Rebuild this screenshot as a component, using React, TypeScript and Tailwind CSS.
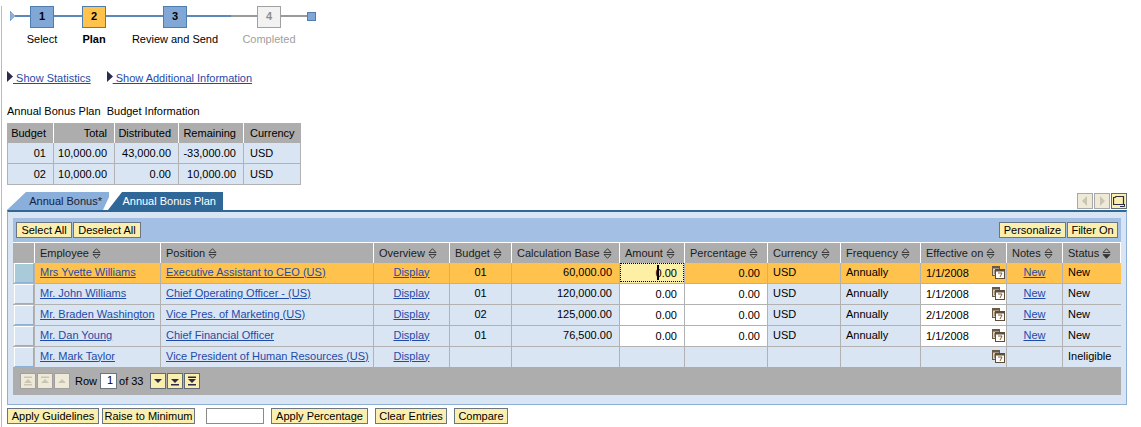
import type { ReactNode } from 'react';

const employees = [
  { name: 'Mrs Yvette Williams', position: 'Executive Assistant to CEO (US)', budget: '01', base: '60,000.00', date: '1/1/2008', active: true },
  { name: 'Mr. John Williams', position: 'Chief Operating Officer - (US)', budget: '01', base: '120,000.00', date: '1/1/2008' },
  { name: 'Mr. Braden Washington', position: 'Vice Pres. of Marketing (US)', budget: '02', base: '125,000.00', date: '2/1/2008' },
  { name: 'Mr. Dan Young', position: 'Chief Financial Officer', budget: '01', base: '76,500.00', date: '1/1/2008' },
  { name: 'Mr. Mark Taylor', position: 'Vice President of Human Resources (US)', ineligible: true },
];

const columns = [
  { label: 'Employee' },
  { label: 'Position' },
  { label: 'Overview' },
  { label: 'Budget' },
  { label: 'Calculation Base' },
  { label: 'Amount' },
  { label: 'Percentage' },
  { label: 'Currency' },
  { label: 'Frequency' },
  { label: 'Effective on' },
  { label: 'Notes' },
  { label: 'Status', sorted: true },
];

function Btn({ children, className = '' }: { children: ReactNode; className?: string }) {
  return (
    <button className={`h-[16px] border border-[#6b7680] bg-[#fbefb0] text-[11px] leading-[13px] text-black ${className}`}>
      {children}
    </button>
  );
}

function Square({ n, tone, className = '' }: { n: number; tone: string; className?: string }) {
  return (
    <div className={`flex h-[22px] w-[24px] items-center justify-center border pb-[2px] text-[11px] font-bold ${tone} ${className}`}>
      {n}
    </div>
  );
}

function Line({ className }: { className: string }) {
  return <div className={`mb-[2px] h-[1.5px] ${className}`} />;
}

function Expander() {
  return (
    <svg width="6" height="11" viewBox="0 0 6 11" className="-mt-px shrink-0">
      <path d="M0 0 L6 5.5 L0 11 Z" fill="#2b2d4a" />
    </svg>
  );
}

function SortIcon({ sorted }: { sorted?: boolean }) {
  return (
    <svg width="9" height="11" viewBox="0 0 9 11" className="ml-[3px] shrink-0">
      <path d="M4.5 0.7 L8 4.5 L1 4.5 Z" fill="none" stroke="#3d3d3d" strokeWidth="1" />
      <path d="M4.5 10.3 L8 6.5 L1 6.5 Z" fill={sorted ? '#333' : 'none'} stroke="#3d3d3d" strokeWidth="1" />
    </svg>
  );
}

function CalendarIcon() {
  return (
    <svg width="13" height="13" viewBox="0 0 13 13" className="-mt-[2px] shrink-0">
      <rect x="0.5" y="0.5" width="7" height="9" fill="#d8d0c0" stroke="#6b5a45" />
      <rect x="0.5" y="0.5" width="7" height="2" fill="#6b5a45" />
      <path d="M2 5 H3.5 M2 7 H3.5" stroke="#6b5a45" />
      <rect x="3.5" y="3.5" width="9" height="9" fill="#fff" stroke="#5d4c38" />
      <rect x="3.5" y="3.5" width="9" height="2" fill="#5d4c38" />
      <path d="M6 7 H10 L8 11" fill="none" stroke="#8a5a2a" strokeWidth="1" />
    </svg>
  );
}

function PagerBtn({ disabled, dir, bars }: { disabled?: boolean; dir: 'up' | 'down'; bars: number }) {
  const color = disabled ? '#c9c5b5' : '#2b2d4a';
  return (
    <div className={`flex h-[16px] w-[16px] items-center justify-center border ${disabled ? 'border-[#a0a0a0] bg-[#efe9d8]' : 'border-[#5f6a75] bg-[#fbefb0]'}`}>
      <svg width="10" height="10" viewBox="0 0 10 10">
        <path d={dir === 'up' ? 'M5 3 L9 7 L1 7 Z' : 'M1 3 L9 3 L5 7 Z'} fill={color} />
        {bars > 0 && <rect x="1" y={dir === 'up' ? 0.5 : 8} width="8" height="1.5" fill={color} />}
        {bars > 1 && <rect x="1" y={dir === 'up' ? 8 : 0.5} width="8" height="1.5" fill={color} />}
      </svg>
    </div>
  );
}

function NavBtn({ children, active }: { children: ReactNode; active?: boolean }) {
  return (
    <div className={`flex h-[16px] w-[16px] items-center justify-center border ${active ? 'border-[#5f6a75] bg-[#fbefb0]' : 'border-[#a8a8a8] bg-[#efe9d8]'}`}>
      {children}
    </div>
  );
}

// base cell; "tx" lifts plain text a little above the input-style cells
const td = 'h-[21px] border-b border-[#b2b2b2] p-0 text-black';
const tr = 'border-r';
const tx = 'pb-[2px]';
const link = 'text-[#1f4aa8] underline';

function BudgetTable() {
  const rows = [
    ['01', '10,000.00', '43,000.00', '-33,000.00'],
    ['02', '10,000.00', '0.00', '10,000.00'],
  ];
  const body = 'h-[21px] border-r border-b border-[#b2b2b2] bg-[#d9e5f3] p-0 pr-[7px] text-right';
  return (
    <table className="w-[294px] table-fixed border-separate border-spacing-0 text-[11px] text-black">
      <colgroup>
        <col className="w-[47px]" />
        <col className="w-[61px]" />
        <col className="w-[64px]" />
        <col className="w-[65px]" />
        <col className="w-[57px]" />
      </colgroup>
      <thead>
        <tr className="h-[20px] bg-[#adadad]">
          {['Budget', 'Total', 'Distributed', 'Remaining'].map((h) => (
            <th key={h} className="border-r border-white p-0 pr-[7px] text-right font-normal">{h}</th>
          ))}
          <th className="p-0 pl-[6px] text-left font-normal">Currency</th>
        </tr>
      </thead>
      <tbody>
        {rows.map((r) => (
          <tr key={r[0]}>
            {r.map((c, i) => (
              <td key={i} className={`${body} ${i === 0 ? 'border-l' : ''}`}>{c}</td>
            ))}
            <td className="h-[21px] border-r border-b border-[#b2b2b2] bg-[#d9e5f3] p-0 pl-[6px]">USD</td>
          </tr>
        ))}
      </tbody>
    </table>
  );
}

function EmployeeTable() {
  return (
    <table className="w-[1108px] table-fixed border-separate border-spacing-0 text-[11px]">
      <colgroup>
        <col className="w-[22px]" />
        <col className="w-[126px]" />
        <col className="w-[213px]" />
        <col className="w-[76px]" />
        <col className="w-[62px]" />
        <col className="w-[108px]" />
        <col className="w-[65px]" />
        <col className="w-[83px]" />
        <col className="w-[73px]" />
        <col className="w-[80px]" />
        <col className="w-[86px]" />
        <col className="w-[56px]" />
        <col className="w-[58px]" />
      </colgroup>
      <thead>
        <tr>
          <th className="h-[21px] border-t border-r border-white bg-[#adadad] p-0" />
          {columns.map((c) => (
            <th key={c.label} className="h-[21px] border-t border-r border-white bg-[#adadad] p-0 pl-[5px] font-normal text-[#1c1c1c]">
              <div className="flex items-center whitespace-nowrap">
                {c.label}
                <SortIcon sorted={c.sorted} />
              </div>
            </th>
          ))}
        </tr>
      </thead>
      <tbody>
        {employees.map((e) => {
          const bg = e.active ? 'bg-[#ffc34d]' : 'bg-[#d9e5f3]';
          const edit = e.ineligible ? 'bg-[#d9e5f3]' : e.active ? 'bg-[#ffc34d]' : 'bg-white';
          const cell = `${td} ${tr} ${tx} ${bg} pl-[5px]`;
          return (
            <tr key={e.name}>
              <td className={`${td} ${tr} ${bg}`}>
                <div className={`mx-auto h-[20px] w-[20px] border border-t-white border-l-white border-r-[#8fb0d6] border-b-[#8fb0d6] ${e.active ? 'bg-[#a9cbd9]' : 'bg-[#d9e5f3]'}`} />
              </td>
              <td className={cell}><a className={link}>{e.name}</a></td>
              <td className={cell}><a className={link}>{e.position}</a></td>
              <td className={`${td} ${tr} ${tx} ${bg} text-center`}><a className={link}>Display</a></td>
              <td className={`${td} ${tr} ${tx} ${bg} text-center`}>{e.budget}</td>
              <td className={`${td} ${tr} ${tx} ${bg} pr-[7px] text-right`}>{e.base}</td>
              {e.active ? (
                <td className={`${td} ${tr} relative bg-[#fdf0a5] pr-[7px] text-right`}>
                  <div className="absolute inset-x-0 top-0 bottom-px border border-dotted border-black" />
                  <div className="absolute top-[2px] left-[37px] h-[15px] w-[1.5px] bg-black" />
                  0.00
                </td>
              ) : (
                <td className={`${td} ${tr} ${edit} pr-[7px] text-right`}>{e.ineligible ? '' : '0.00'}</td>
              )}
              <td className={`${td} ${tr} ${edit} pr-[7px] text-right`}>{e.ineligible ? '' : '0.00'}</td>
              <td className={cell}>{e.ineligible ? '' : 'USD'}</td>
              <td className={cell}>{e.ineligible ? '' : 'Annually'}</td>
              <td className={`${td} ${tr} ${edit} pl-[5px]`}>
                <div className="flex items-center justify-between pr-[1px]">
                  <span>{e.date}</span>
                  <CalendarIcon />
                </div>
              </td>
              <td className={`${td} ${tr} ${tx} ${bg} text-center`}>{!e.ineligible && <a className={link}>New</a>}</td>
              <td className={`${td} ${tx} ${bg} pl-[5px]`}>{e.ineligible ? 'Ineligible' : 'New'}</td>
            </tr>
          );
        })}
      </tbody>
    </table>
  );
}

export default function App() {
  return (
    <div className="h-[427px] w-[1141px] overflow-hidden bg-white pl-px font-['Liberation_Sans',sans-serif] text-[11px] leading-[13px] text-black">
      <div className="h-full border-l border-[#a3c0e4] pl-[5px]">
        {/* roadmap */}
        <div className="mt-[6px] flex h-[22px] items-center pl-[3px]">
          <svg width="5" height="10" viewBox="0 0 5 10" className="mb-[2px] shrink-0">
            <path d="M0 0 L5 5 L0 10 Z" fill="#8fb0d6" stroke="#5b88b8" strokeWidth="0.5" />
          </svg>
          <Line className="w-[15px] bg-[#5b88b8]" />
          <Square n={1} tone="border-[#4f7dad] bg-[#81a7d6]" />
          <Line className="w-[28px] bg-[#5b88b8]" />
          <Square n={2} tone="border-[#4f7dad] bg-[#ffc34d]" />
          <Line className="w-[57px] bg-[#5b88b8]" />
          <Square n={3} tone="border-[#4f7dad] bg-[#81a7d6]" />
          <Line className="w-[44px] bg-[#5b88b8]" />
          <Line className="w-[26px] bg-[#999]" />
          <Square n={4} tone="border-[#a0a0a0] bg-[#f2f2f2] text-[#8c8c8c]" />
          <Line className="w-[26px] bg-[#999]" />
          <div className="mb-[2px] h-[9px] w-[9px] border border-[#4f7dad] bg-[#81a7d6]" />
        </div>
        <div className="mt-[5px] flex pl-[5px] text-center">
          <div className="w-[60px]">Select</div>
          <div className="w-[44px] font-bold">Plan</div>
          <div className="w-[118px]">Review and Send</div>
          <div className="w-[70px] text-[#a0a0a0]">Completed</div>
        </div>

        {/* expandable links */}
        <div className="mt-[26px] flex items-start">
          <Expander />
          <a className="text-[#1f4aa8] underline">&nbsp;Show Statistics</a>
          <div className="w-[16px]" />
          <Expander />
          <a className="text-[#1f4aa8] underline">&nbsp;Show Additional Information</a>
        </div>

        <div className="mt-[20px]">Annual Bonus Plan&nbsp; Budget Information</div>
        <div className="mt-[5px]">
          <BudgetTable />
        </div>

        {/* tabs */}
        <div className="mt-[7px] flex h-[18px] w-[1120px] justify-between">
          <div className="flex">
            <div className="flex w-[102px] items-center justify-end bg-[#8aafda] pr-[7px] text-[#16233a] [clip-path:polygon(19px_0,102px_0,102px_5px,96px_100%,0_100%)]">
              Annual Bonus*
            </div>
            <div className="-ml-px flex w-[115px] items-center justify-end bg-[#2f6799] pr-[7px] text-white [clip-path:polygon(14px_0,100%_0,100%_100%,0_100%)]">
              Annual Bonus Plan
            </div>
          </div>
          <div className="flex gap-px pt-px">
            <NavBtn>
              <svg width="6" height="10" viewBox="0 0 6 10"><path d="M5 0 L0 5 L5 10 Z" fill="#c9c5b5" /></svg>
            </NavBtn>
            <NavBtn>
              <svg width="6" height="10" viewBox="0 0 6 10"><path d="M1 0 L6 5 L1 10 Z" fill="#c9c5b5" /></svg>
            </NavBtn>
            <NavBtn active>
              <svg width="12" height="11" viewBox="0 0 12 11">
                <path d="M0.5 1.5 H2 L3 0.5 H10.5 V8.5 H0.5 Z" fill="none" stroke="#2b2d4a" strokeWidth="1.2" />
                <path d="M7 10.5 H11.5 V8" fill="none" stroke="#2b2d4a" />
              </svg>
            </NavBtn>
          </div>
        </div>

        {/* panel */}
        <div className="h-[195px] w-[1120px] border-x border-b border-t-2 border-x-[#8fb0d6] border-b-[#8fb0d6] border-t-[#2f6799] bg-[#d9e5f3] px-[5px] pt-[6px]">
          <div className="flex h-[24px] justify-between bg-[#a3c0e4] px-[3px] pt-[4px]">
            <div className="flex gap-px">
              <Btn className="w-[56px]">Select All</Btn>
              <Btn className="w-[68px]">Deselect All</Btn>
            </div>
            <div className="flex gap-px">
              <Btn className="w-[67px]">Personalize</Btn>
              <Btn className="w-[51px]">Filter On</Btn>
            </div>
          </div>
          <EmployeeTable />
          <div className="-mt-px flex h-[28px] items-center bg-[#adadad] pl-[7px]">
            <div className="flex gap-px">
              <PagerBtn disabled dir="up" bars={2} />
              <PagerBtn disabled dir="up" bars={1} />
              <PagerBtn disabled dir="up" bars={0} />
            </div>
            <span className="ml-[5px]">Row</span>
            <div className="ml-[3px] h-[16px] w-[17px] border border-[#6b7680] bg-white pr-[3px] text-right">1</div>
            <span className="ml-[2px]">of 33</span>
            <div className="ml-[7px] flex gap-px">
              <PagerBtn dir="down" bars={0} />
              <PagerBtn dir="down" bars={1} />
              <PagerBtn dir="down" bars={2} />
            </div>
          </div>
        </div>

        {/* bottom actions */}
        <div className="mt-[3px] flex items-start">
          <Btn className="w-[92px]">Apply Guidelines</Btn>
          <Btn className="ml-[3px] w-[93px]">Raise to Minimum</Btn>
          <div className="ml-[11px] h-[16px] w-[58px] border border-[#8a8a8a] bg-white" />
          <Btn className="ml-[7px] w-[97px]">Apply Percentage</Btn>
          <Btn className="ml-[7px] w-[72px]">Clear Entries</Btn>
          <Btn className="ml-[7px] w-[54px]">Compare</Btn>
        </div>
      </div>
    </div>
  );
}
